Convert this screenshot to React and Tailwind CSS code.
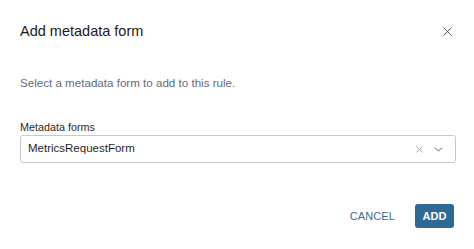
import { X, ChevronDown } from "lucide-react";

export default function App() {
  return (
    <div className="w-[474px] h-[249px] bg-white font-['Liberation_Sans',Arial,sans-serif] flex flex-col px-5">
      <div className="flex items-center justify-between pt-[21px] h-[41px]">
        <h2 className="text-[14.5px] leading-[20px] text-[#1b1b1b]">Add metadata form</h2>
        <button className="text-[#555] -mr-[1px]">
          <X size={15} strokeWidth={1.6} />
        </button>
      </div>
      <p className="mt-[34px] text-[11.6px] leading-[15px] text-[#5f6b7c]">
        Select a metadata form to add to this rule.
      </p>
      <label className="mt-[30px] text-[10.8px] leading-[14px] text-[#2a2a2a]">Metadata forms</label>
      <div className="mt-[1px] h-[28px] w-[436px] border border-[#c8c8c8] rounded-[3px] flex items-center pl-[7px] pr-[10px]">
        <span className="flex-1 text-[11.5px] text-[#1f1f1f]">MetricsRequestForm</span>
        <X size={11} strokeWidth={1.5} className="text-[#8a8a8a]" />
        <ChevronDown size={13} strokeWidth={1.8} className="text-[#555] ml-[7px]" />
      </div>
      <div className="mt-[41px] flex items-center justify-end gap-[20px]">
        <button className="text-[11px] tracking-[0.1px] text-[#3d6a8f]">CANCEL</button>
        <button className="h-[24px] w-[39px] rounded-[3px] bg-[#2f6a95] text-white text-[11px] font-bold">ADD</button>
      </div>
    </div>
  );
}
